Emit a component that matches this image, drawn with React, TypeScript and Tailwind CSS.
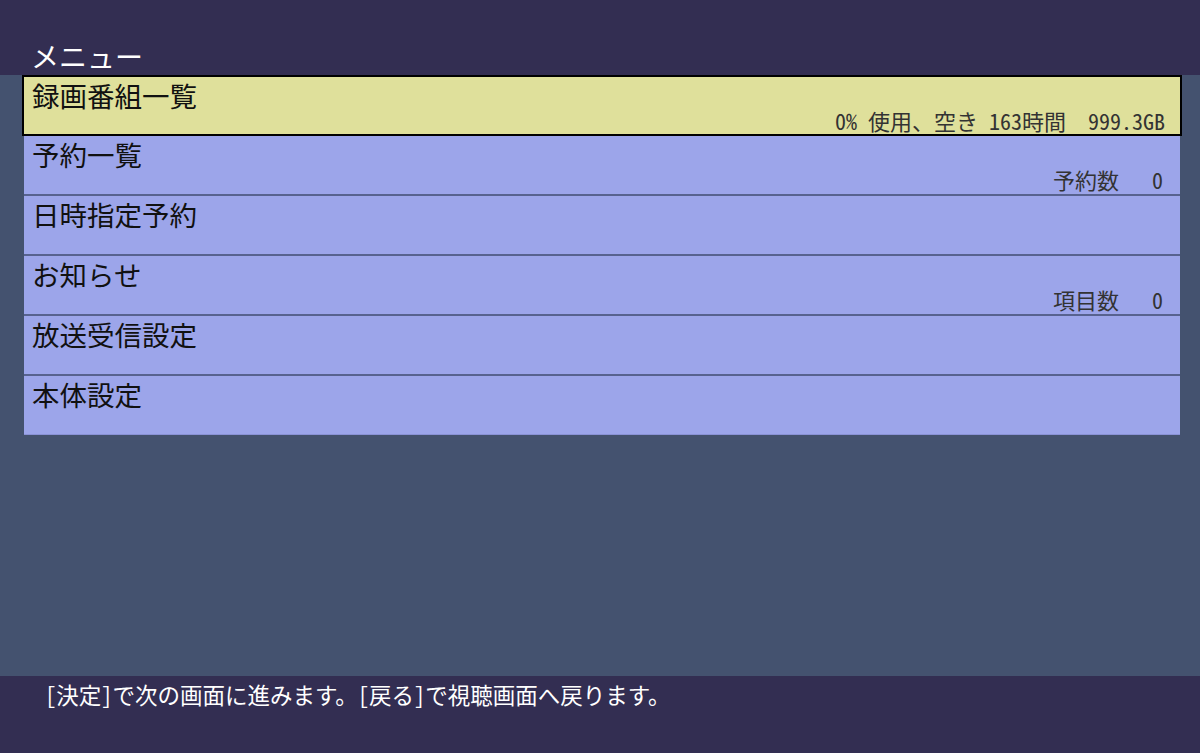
type MenuItem = {
  title: string;
  info?: string;
};

const items: MenuItem[] = [
  { title: '録画番組一覧', info: '0% 使用、空き 163時間  999.3GB' },
  { title: '予約一覧', info: '予約数   0' },
  { title: '日時指定予約' },
  { title: 'お知らせ', info: '項目数   0' },
  { title: '放送受信設定' },
  { title: '本体設定' },
];

export default function App() {
  const selected = 0;

  return (
    <div className="flex h-[753px] w-[1200px] flex-col bg-[#44526f] font-['Noto_Sans_CJK_JP','Noto_Sans',sans-serif]">
      <div className="flex h-[75px] shrink-0 items-end bg-[#332e52] px-[31px] pb-[2px]">
        <h1 className="text-[28px] leading-[34px] text-white">メニュー</h1>
      </div>

      <div className="flex-1 pl-[24px] pr-[20px]">
        <ul className="flex flex-col">
          {items.map((item, i) => {
            const isSelected = i === selected;
            const isLast = i === items.length - 1;
            return (
              <li
                key={item.title}
                className={
                  isSelected
                    ? '-mx-[2px] flex h-[61px] flex-col border-2 border-black bg-[#dfe09b] pl-[8px] pr-[15px] pt-[1px]'
                    : isLast
                      ? 'flex h-[59px] flex-col border-b border-[#8a92d6] bg-[#9ca5ea] pl-[8px] pr-[17px] pt-[1px]'
                      : 'flex h-[60px] flex-col border-b-2 border-[#57628f] bg-[#9ca5ea] pl-[8px] pr-[17px] pt-[1px]'
                }
              >
                <span className="text-[27.5px] leading-[34px] text-[#111]">{item.title}</span>
                {item.info && (
                  <span className="-mt-[3px] ml-auto whitespace-pre text-[22px] leading-[22px] text-[#333] [font-feature-settings:'hwid']">
                    {item.info}
                  </span>
                )}
              </li>
            );
          })}
        </ul>
      </div>

      <div className="h-[77px] shrink-0 bg-[#332e52] px-[45px] pt-[3px]">
        <p className="text-[22.5px] leading-[30px] text-white [font-feature-settings:'hwid']">
          [決定]で次の画面に進みます。[戻る]で視聴画面へ戻ります。
        </p>
      </div>
    </div>
  );
}
